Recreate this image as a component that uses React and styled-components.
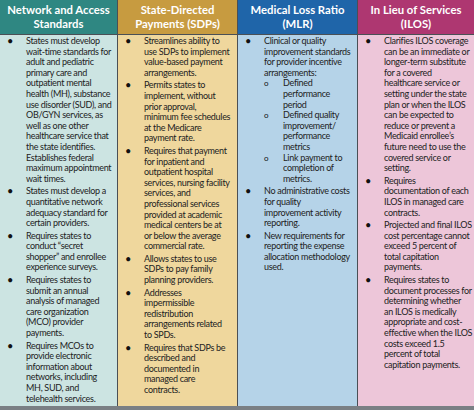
import React from 'react';
import styled, { createGlobalStyle } from 'styled-components';

const GlobalStyle = createGlobalStyle`
  html, body {
    margin: 0;
    padding: 0;
    background: #ffffff;
  }
  body {
    font-family: Lato, "Open Sans", sans-serif;
  }
`;

const columns = [
  {
    title: 'Network and Access\nStandards',
    head: '#2f8782',
    body: '#cce4e2',
    items: [
      { text: 'States must develop\nwait-time standards for\nadult and pediatric\nprimary care and\noutpatient mental\nhealth (MH), substance\nuse disorder (SUD), and\nOB/GYN services, as\nwell as one other\nhealthcare service that\nthe state identifies.\nEstablishes federal\nmaximum appointment\nwait times.' },
      { text: 'States must develop a\nquantitative network\nadequacy standard for\ncertain providers.' },
      { text: 'Requires states to\nconduct \u201csecret\nshopper\u201d and enrollee\nexperience surveys.' },
      { text: 'Requires states to\nsubmit an annual\nanalysis of managed\ncare organization\n(MCO) provider\npayments.' },
      { text: 'Requires MCOs to\nprovide electronic\ninformation about\nnetworks, including\nMH, SUD, and\ntelehealth services.' },
    ],
  },
  {
    title: 'State-Directed\nPayments (SDPs)',
    head: '#c79b40',
    body: '#efd79d',
    items: [
      { text: 'Streamlines ability to\nuse SDPs to implement\nvalue-based payment\narrangements.' },
      { text: 'Permits states to\nimplement, without\nprior approval,\nminimum fee schedules\nat the Medicare\npayment rate.' },
      { text: 'Requires that payment\nfor inpatient and\noutpatient hospital\nservices, nursing facility\nservices, and\nprofessional services\nprovided at academic\nmedical centers be at\nor below the average\ncommercial rate.' },
      { text: 'Allows states to use\nSDPs to pay family\nplanning providers.' },
      { text: 'Addresses\nimpermissible\nredistribution\narrangements related\nto SPDs.' },
      { text: 'Requires that SDPs be\ndescribed and\ndocumented in\nmanaged care\ncontracts.' },
    ],
  },
  {
    title: 'Medical Loss Ratio\n(MLR)',
    head: '#1f65a9',
    body: '#b5d3e8',
    items: [
      {
        text: 'Clinical or quality\nimprovement standards\nfor provider incentive\narrangements:',
        sub: [
          'Defined\nperformance\nperiod',
          'Defined quality\nimprovement/\nperformance\nmetrics',
          'Link payment to\ncompletion of\nmetrics.',
        ],
      },
      { text: 'No administrative costs\nfor quality\nimprovement activity\nreporting.' },
      { text: 'New requirements for\nreporting the expense\nallocation methodology\nused.' },
    ],
  },
  {
    title: 'In Lieu of Services\n(ILOS)',
    head: '#ae3771',
    body: '#edc6d9',
    items: [
      { text: 'Clarifies ILOS coverage\ncan be an immediate or\nlonger-term substitute\nfor a covered\nhealthcare service or\nsetting under the state\nplan or when the ILOS\ncan be expected to\nreduce or prevent a\nMedicaid enrollee\u2019s\nfuture need to use the\ncovered service or\nsetting.' },
      { text: 'Requires\ndocumentation of each\nILOS in managed care\ncontracts.' },
      { text: 'Projected and final ILOS\ncost percentage cannot\nexceed 5 percent of\ntotal capitation\npayments.' },
      { text: 'Requires states to\ndocument processes for\ndetermining whether\nan ILOS is medically\nappropriate and cost-\neffective when the ILOS\ncosts exceed 1.5\npercent of total\ncapitation payments.' },
    ],
  },
];

const Table = styled.div`
  display: grid;
  grid-template-columns: 117px 119px 119px 1fr;
  width: 474px;
  height: 406px;
  border-bottom: 4px solid #7a7f84;
  background: #4a4f55;
  column-gap: 1px;
`;

const Column = styled.div`
  display: grid;
  grid-template-rows: 34px minmax(0, 1fr);
  row-gap: 1px;
  min-height: 0;
  background: #4a4f55;
`;

const Header = styled.div`
  background: ${(p) => p.$color};
  color: #ffffff;
  display: flex;
  align-items: center;
  justify-content: center;
  text-align: center;
  white-space: pre-line;
  font-weight: 700;
  font-size: 11.3px;
  line-height: 14px;
`;

const Body = styled.div`
  background: ${(p) => p.$color};
  padding: 1px 0 0 7px;
  overflow: hidden;
`;

const List = styled.ul`
  list-style: none;
  margin: 0;
  padding: 0;
  display: flex;
  flex-direction: column;
  gap: 2px;
`;

const Item = styled.li`
  display: grid;
  grid-template-columns: 19px 1fr;
  font-size: 9px;
  letter-spacing: -0.3px;
  line-height: 10.6px;
  color: #222222;
`;

const Marker = styled.span`
  font-size: ${(p) => (p.$sub ? '8px' : '11px')};
  line-height: 10.6px;
  color: #111;
`;

const Text = styled.span`
  white-space: pre;
`;

const SubList = styled(List)`
  gap: 0;
`;

export default function App() {
  return (
    <>
      <GlobalStyle />
      <Table>
        {columns.map((col) => (
          <Column key={col.title}>
            <Header $color={col.head}>{col.title}</Header>
            <Body $color={col.body}>
              <List>
                {col.items.map((item, i) => (
                  <Item key={i}>
                    <Marker>•</Marker>
                    <div>
                      <Text>{item.text}</Text>
                      {item.sub && (
                        <SubList>
                          {item.sub.map((s, j) => (
                            <Item key={j}>
                              <Marker $sub>o</Marker>
                              <Text>{s}</Text>
                            </Item>
                          ))}
                        </SubList>
                      )}
                    </div>
                  </Item>
                ))}
              </List>
            </Body>
          </Column>
        ))}
      </Table>
    </>
  );
}
